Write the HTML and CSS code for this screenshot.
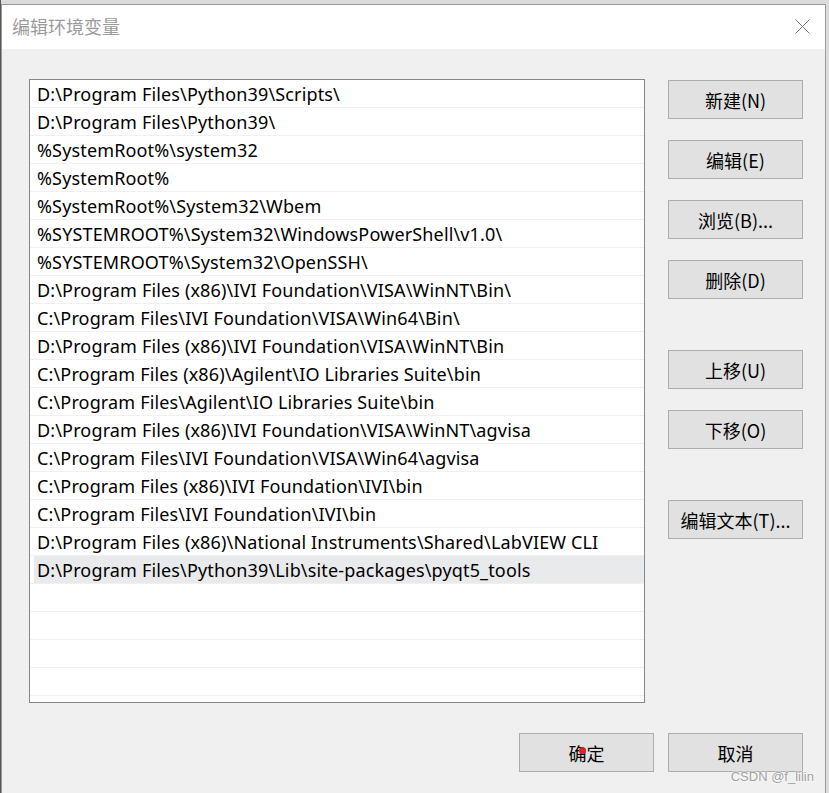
FILE: index.html
```html
<!DOCTYPE html>
<html lang="zh-CN">
  <head>
    <meta charset="UTF-8" />
    <meta name="viewport" content="width=device-width, initial-scale=1.0" />
    <title>编辑环境变量</title>
    <link rel="stylesheet" href="styles.css">
  </head>
  <body>
    <div class="dialog">
      <div class="titlebar">
        <span class="title">编辑环境变量</span>
        <svg class="close" width="15" height="15" viewBox="0 0 15 15">
          <path d="M0.5 0.5 L14.5 14.5 M14.5 0.5 L0.5 14.5" stroke="#777" stroke-width="1" fill="none" />
        </svg>
      </div>

      <div class="body">
        <div class="main">
          <div class="list">
            <div class="row">D:\Program Files\Python39\Scripts\</div>
            <div class="row">D:\Program Files\Python39\</div>
            <div class="row">%SystemRoot%\system32</div>
            <div class="row">%SystemRoot%</div>
            <div class="row">%SystemRoot%\System32\Wbem</div>
            <div class="row">%SYSTEMROOT%\System32\WindowsPowerShell\v1.0\</div>
            <div class="row">%SYSTEMROOT%\System32\OpenSSH\</div>
            <div class="row">D:\Program Files (x86)\IVI Foundation\VISA\WinNT\Bin\</div>
            <div class="row">C:\Program Files\IVI Foundation\VISA\Win64\Bin\</div>
            <div class="row">D:\Program Files (x86)\IVI Foundation\VISA\WinNT\Bin</div>
            <div class="row">C:\Program Files (x86)\Agilent\IO Libraries Suite\bin</div>
            <div class="row">C:\Program Files\Agilent\IO Libraries Suite\bin</div>
            <div class="row">D:\Program Files (x86)\IVI Foundation\VISA\WinNT\agvisa</div>
            <div class="row">C:\Program Files\IVI Foundation\VISA\Win64\agvisa</div>
            <div class="row">C:\Program Files (x86)\IVI Foundation\IVI\bin</div>
            <div class="row">C:\Program Files\IVI Foundation\IVI\bin</div>
            <div class="row">D:\Program Files (x86)\National Instruments\Shared\LabVIEW CLI</div>
            <div class="row selected">D:\Program Files\Python39\Lib\site-packages\pyqt5_tools</div>
            <div class="row"></div>
            <div class="row"></div>
            <div class="row"></div>
            <div class="row"></div>
          </div>

          <div class="side">
            <button class="button">新建(N)</button>
            <button class="button">编辑(E)</button>
            <button class="button">浏览(B)...</button>
            <button class="button">删除(D)</button>
            <button class="button move">上移(U)</button>
            <button class="button">下移(O)</button>
            <button class="button text">编辑文本(T)...</button>
          </div>
        </div>

        <div class="footer">
          <button class="button ok">确定<span class="dot"></span></button>
          <button class="button">取消</button>
        </div>
      </div>
    </div>

    <div class="watermark">CSDN @f_lilin</div>
  </body>
</html>
```

FILE: styles.css
```css
* {
  margin: 0;
  padding: 0;
  box-sizing: border-box;
  font-family: "Noto Sans", "Noto Sans CJK SC", sans-serif;
}

body {
  background: #dcdcdc;
  border-left: 1px solid #5a5550;
  overflow: hidden;
  height: 793px;
  position: relative;
}

.dialog {
  width: 825px;
  margin-top: 4px;
  border: 1px solid #9a9a9a;
  border-bottom: none;
  background: #f0f0f0;
}

.titlebar {
  height: 44px;
  background: #ffffff;
  display: flex;
  align-items: center;
  justify-content: space-between;
  padding: 0 15px 0 10px;
}

.title {
  font-size: 18px;
  color: #9b9b9b;
  font-family: "Noto Sans CJK SC", sans-serif;
  margin-top: -2px;
}

.close {
  display: block;
  margin-top: -1px;
}

.body {
  padding: 30px 20px 0 27px;
  height: 745px;
}

.main {
  display: flex;
  gap: 23px;
}

.list {
  width: 616px;
  height: 624px;
  border: 1px solid #828790;
  background: #ffffff;
  overflow: hidden;
}

.row {
  height: 28px;
  border-bottom: 1px solid #f0f0f0;
  padding: 1px 0 0 7px;
  font-size: 18px;
  line-height: 26px;
  letter-spacing: 0.15px;
  color: #000;
  white-space: nowrap;
}

.row.selected {
  background: linear-gradient(to right, transparent 4px, #e9eaec 4px);
}

.side {
  display: flex;
  flex-direction: column;
  gap: 21px;
  padding-top: 1px;
}

.button {
  width: 135px;
  height: 39px;
  background: #e1e1e1;
  border: 1px solid #adadad;
  font-size: 18px;
  color: #000;
  font-family: "Noto Sans CJK SC", sans-serif;
  position: relative;
}

.side .move {
  margin-top: 30px;
}

.side .text {
  margin-top: 30px;
}

.footer {
  display: flex;
  justify-content: flex-end;
  gap: 14px;
  margin-top: 30px;
  padding-right: 2px;
}

.dot {
  position: absolute;
  left: 59px;
  top: 13px;
  width: 7px;
  height: 7px;
  border-radius: 50%;
  background: #d9232a;
}

.watermark {
  position: absolute;
  right: 15px;
  top: 769px;
  font-size: 13px;
  font-family: "Liberation Sans", sans-serif;
  color: #a0a0a0;
  text-shadow: 0 0 2px #fff, 0 0 2px #fff;
}
```
